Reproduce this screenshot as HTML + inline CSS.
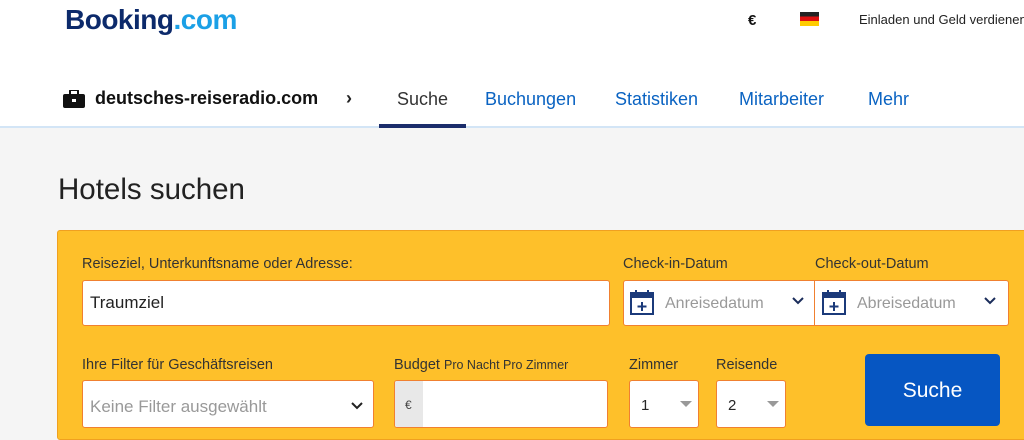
<!DOCTYPE html>
<html><head><meta charset="utf-8"><style>
*{box-sizing:border-box;margin:0;padding:0}
body{width:1024px;height:426px;overflow:hidden;background:#f5f5f5;font-family:"Liberation Sans",sans-serif;position:relative;color:#262626}
.a{position:absolute;white-space:nowrap}
.hdr{position:absolute;left:0;top:0;width:1024px;height:128px;background:#fff;border-bottom:2px solid #d3e5f6}
.nav{font-size:18px;color:#0a63c2;top:89px}
.panel{position:absolute;left:57px;top:230px;width:980px;height:210px;background:#fec02a;border:1px solid #f0a020;border-radius:3px}
.lbl{font-size:14.5px;color:#333}
.inp{position:absolute;background:#fff;border:1px solid #f08030;border-radius:3px}
.ph{color:#999;font-size:16px}
</style></head><body>
<div class="hdr"></div>
<div class="a" style="left:65px;top:4px;font-size:28px;font-weight:bold;letter-spacing:-0.5px;color:#0c2a6b">Booking<span style="color:#1ba0e6">.com</span></div>
<div class="a" style="left:748px;top:12px;font-size:15px;font-weight:bold;color:#111">€</div>
<div class="a" style="left:800px;top:12px;width:19px;height:14px;background:linear-gradient(#222 0 33%,#dd1010 33% 66%,#ffcc00 66%)"></div>
<div class="a" style="left:859px;top:12px;font-size:13px;color:#222">Einladen und Geld verdienen</div>
<svg class="a" style="left:63px;top:90px" width="22" height="18" viewBox="0 0 22 18"><rect x="7" y="0" width="8" height="5" rx="1" fill="none" stroke="#111" stroke-width="2"/><rect x="0" y="4" width="22" height="14" rx="2" fill="#111"/><rect x="9" y="9" width="4" height="3" fill="#fff"/></svg>
<div class="a" style="left:95px;top:88px;font-size:18px;font-weight:bold;color:#111">deutsches-reiseradio.com</div>
<div class="a" style="left:346px;top:88px;font-size:18px;font-weight:bold;color:#222">›</div>
<div class="a nav" style="left:397px;color:#333">Suche</div>
<div class="a" style="left:379px;top:124px;width:87px;height:4px;background:#1b2d6b"></div>
<div class="a nav" style="left:485px">Buchungen</div>
<div class="a nav" style="left:615px">Statistiken</div>
<div class="a nav" style="left:739px">Mitarbeiter</div>
<div class="a nav" style="left:868px">Mehr</div>
<div class="a" style="left:58px;top:173px;font-size:29.5px;color:#222">Hotels suchen</div>
<div class="panel"></div>
<div class="a lbl" style="left:82px;top:256px">Reiseziel, Unterkunftsname oder Adresse:</div>
<div class="inp" style="left:82px;top:280px;width:528px;height:46px"><span class="a" style="left:7px;top:12px;font-size:17px;color:#222">Traumziel</span></div>
<div class="a lbl" style="left:623px;top:256px">Check-in-Datum</div>
<div class="a lbl" style="left:815px;top:256px">Check-out-Datum</div>
<div class="inp" style="left:623px;top:280px;width:386px;height:46px"></div>
<div class="a" style="left:814px;top:281px;width:1px;height:44px;background:#f08030"></div>
<svg class="a" style="left:630px;top:289px" width="24" height="26" viewBox="0 0 24 26"><rect x="1" y="4" width="22" height="21" fill="none" stroke="#1b3a7a" stroke-width="2"/><rect x="1" y="4" width="22" height="5" fill="#1b3a7a"/><rect x="5" y="1" width="2" height="5" fill="#1b3a7a"/><rect x="17" y="1" width="2" height="5" fill="#1b3a7a"/><path d="M12 13v9M7.5 17.5h9" stroke="#1b3a7a" stroke-width="2"/></svg>
<svg class="a" style="left:822px;top:289px" width="24" height="26" viewBox="0 0 24 26"><rect x="1" y="4" width="22" height="21" fill="none" stroke="#1b3a7a" stroke-width="2"/><rect x="1" y="4" width="22" height="5" fill="#1b3a7a"/><rect x="5" y="1" width="2" height="5" fill="#1b3a7a"/><rect x="17" y="1" width="2" height="5" fill="#1b3a7a"/><path d="M12 13v9M7.5 17.5h9" stroke="#1b3a7a" stroke-width="2"/></svg>
<div class="a ph" style="left:665px;top:295px">Anreisedatum</div>
<div class="a ph" style="left:857px;top:295px">Abreisedatum</div>
<svg class="a" style="left:792px;top:297px" width="12" height="8"><path d="M1 1l5 5 5-5" fill="none" stroke="#1b2d5b" stroke-width="2"/></svg>
<svg class="a" style="left:984px;top:297px" width="12" height="8"><path d="M1 1l5 5 5-5" fill="none" stroke="#1b2d5b" stroke-width="2"/></svg>
<div class="a lbl" style="left:82px;top:357px">Ihre Filter für Geschäftsreisen</div>
<div class="a lbl" style="left:394px;top:357px">Budget <span style="font-size:12.5px">Pro Nacht Pro Zimmer</span></div>
<div class="a lbl" style="left:629px;top:357px">Zimmer</div>
<div class="a lbl" style="left:716px;top:357px">Reisende</div>
<div class="inp" style="left:82px;top:380px;width:292px;height:48px"><span class="a ph" style="left:7px;top:16px;font-size:17px">Keine Filter ausgewählt</span></div>
<svg class="a" style="left:351px;top:402px" width="12" height="8"><path d="M1 1l5 5 5-5" fill="none" stroke="#222" stroke-width="2"/></svg>
<div class="inp" style="left:394px;top:380px;width:214px;height:48px;overflow:hidden"><div class="a" style="left:0;top:0;width:28px;height:48px;background:#e8e8e8"></div><span class="a" style="left:10px;top:17px;font-size:12px;color:#444">€</span></div>
<div class="inp" style="left:629px;top:380px;width:70px;height:48px"><span class="a" style="left:11px;top:16px;font-size:15px">1</span><svg class="a" style="left:50px;top:20px" width="12" height="6"><path d="M0 0h12L6 6z" fill="#999"/></svg></div>
<div class="inp" style="left:716px;top:380px;width:70px;height:48px"><span class="a" style="left:11px;top:16px;font-size:15px">2</span><svg class="a" style="left:50px;top:20px" width="12" height="6"><path d="M0 0h12L6 6z" fill="#999"/></svg></div>
<div class="a" style="left:865px;top:354px;width:135px;height:72px;background:#0656c2;border-radius:4px;color:#fff;font-size:21px;text-align:center;line-height:74px">Suche</div>
</body></html>
